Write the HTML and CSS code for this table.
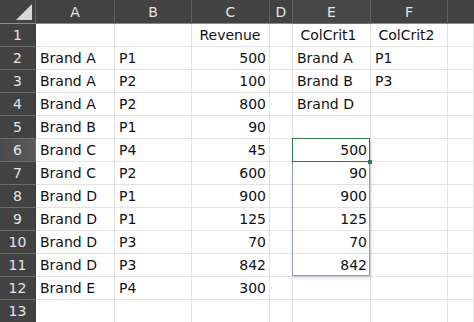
FILE: index.html
```html
<!DOCTYPE html>
<html>
<head>
<meta charset="utf-8">
<link rel="stylesheet" href="styles.css">
</head>
<body>
<div class="sheet">
  <div class="grid">
    <div class="hd corner"><span class="tri"></span></div>
    <div class="hd col">A</div>
    <div class="hd col">B</div>
    <div class="hd col">C</div>
    <div class="hd col">D</div>
    <div class="hd col act">E</div>
    <div class="hd col">F</div>
    <div class="hd col last"></div>

    <div class="hd row">1</div><div class="c"></div><div class="c"></div><div class="c t"> Revenue</div><div class="c"></div><div class="c t"> ColCrit1</div><div class="c t"> ColCrit2</div><div class="c"></div>
    <div class="hd row">2</div><div class="c">Brand A</div><div class="c">P1</div><div class="c n">500</div><div class="c"></div><div class="c">Brand A</div><div class="c">P1</div><div class="c"></div>
    <div class="hd row">3</div><div class="c">Brand A</div><div class="c">P2</div><div class="c n">100</div><div class="c"></div><div class="c">Brand B</div><div class="c">P3</div><div class="c"></div>
    <div class="hd row">4</div><div class="c">Brand A</div><div class="c">P2</div><div class="c n">800</div><div class="c"></div><div class="c">Brand D</div><div class="c"></div><div class="c"></div>
    <div class="hd row">5</div><div class="c">Brand B</div><div class="c">P1</div><div class="c n">90</div><div class="c"></div><div class="c"></div><div class="c"></div><div class="c"></div>
    <div class="hd row act">6</div><div class="c">Brand C</div><div class="c">P4</div><div class="c n">45</div><div class="c"></div><div class="c n">500</div><div class="c"></div><div class="c"></div>
    <div class="hd row">7</div><div class="c">Brand C</div><div class="c">P2</div><div class="c n">600</div><div class="c"></div><div class="c n">90</div><div class="c"></div><div class="c"></div>
    <div class="hd row">8</div><div class="c">Brand D</div><div class="c">P1</div><div class="c n">900</div><div class="c"></div><div class="c n">900</div><div class="c"></div><div class="c"></div>
    <div class="hd row">9</div><div class="c">Brand D</div><div class="c">P1</div><div class="c n">125</div><div class="c"></div><div class="c n">125</div><div class="c"></div><div class="c"></div>
    <div class="hd row">10</div><div class="c">Brand D</div><div class="c">P3</div><div class="c n">70</div><div class="c"></div><div class="c n">70</div><div class="c"></div><div class="c"></div>
    <div class="hd row">11</div><div class="c">Brand D</div><div class="c">P3</div><div class="c n">842</div><div class="c"></div><div class="c n">842</div><div class="c"></div><div class="c"></div>
    <div class="hd row">12</div><div class="c">Brand E</div><div class="c">P4</div><div class="c n">300</div><div class="c"></div><div class="c"></div><div class="c"></div><div class="c"></div>
    <div class="hd row">13</div><div class="c"></div><div class="c"></div><div class="c"></div><div class="c"></div><div class="c"></div><div class="c"></div><div class="c"></div>
  </div>
  <div class="range"></div>
  <div class="active"><span class="handle"></span></div>
</div>
</body>
</html>
```

FILE: styles.css
```css
* { box-sizing: border-box; }
html, body { margin: 0; padding: 0; background: #fff; overflow: hidden; }
.sheet {
  position: relative;
  width: 474px;
  height: 322px;
  overflow: hidden;
  font-family: "DejaVu Sans", Verdana, sans-serif;
  font-size: 14px;
  color: #111;
}
.grid {
  display: grid;
  grid-template-columns: 36px 79px 77px 78px 23px 78px 77px 1fr;
  grid-template-rows: 24px repeat(13, 23px);
}
.c {
  border-right: 1px solid #e3e3e3;
  border-bottom: 1px solid #e3e3e3;
  padding: 0 3px 0 4px;
  display: flex;
  align-items: center;
  white-space: pre;
  overflow: hidden;
  background: #fff;
}
.c.t { padding-left: 3px; }
.c.n { justify-content: flex-end; padding-right: 3px; }
.hd {
  background: #424242;
  color: #e4e4e4;
  display: flex;
  align-items: center;
  justify-content: center;
}
.hd.col {
  border-right: 1px solid #5e5e5e;
  border-bottom: 1px solid #8a8a8a;
  padding-top: 1px;
}
.hd.col.last { border-right: none; }
.hd.col.act { border-bottom: 1px solid #3f8a58; background: #474747; }
.hd.row {
  border-bottom: 1px solid #6c6c6c;
  border-right: 1px solid #3a3a3a;
}
.hd.row.act {
  background: linear-gradient(to right, #4a4a4a, #5a5a5a);
  border-right: 1px solid #3f8a58;
}
.hd.corner {
  position: relative;
  border-bottom: 1px solid #8a8a8a;
  border-right: 1px solid #5e5e5e;
}
.tri {
  position: absolute;
  right: 3px;
  bottom: 3px;
  width: 0;
  height: 0;
  border-left: 16px solid transparent;
  border-bottom: 16px solid #d6d6d6;
}
.range {
  position: absolute;
  left: 292px;
  top: 138px;
  width: 78px;
  height: 138px;
  border: 1px solid #8d9fc4;
  box-shadow: 1px 2px 3px rgba(90, 110, 150, 0.25);
}
.active {
  position: absolute;
  left: 292px;
  top: 138px;
  width: 78px;
  height: 24px;
  border: 1px solid #2f7a4a;
}
.handle {
  position: absolute;
  right: -3px;
  bottom: -3px;
  width: 4px;
  height: 4px;
  background: #2f7a4a;
}
```
